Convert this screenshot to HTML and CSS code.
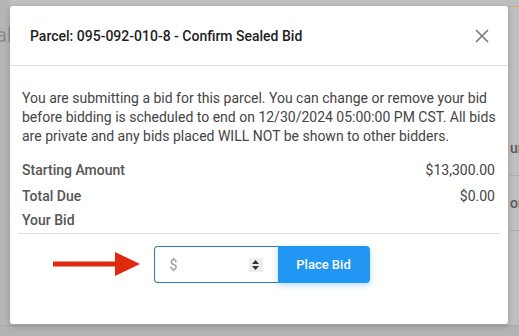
FILE: index.html
```html
<!DOCTYPE html>
<html lang="en">
<head>
  <meta charset="UTF-8" />
  <meta name="viewport" content="width=device-width, initial-scale=1.0"/>
  <title>Confirm Sealed Bid</title>
  <link rel="stylesheet" href="styles.css">
</head>
<body>
  <div class="page">
    <div class="page-top"></div>
    <div class="page-left">al</div>
    <div class="page-right">
      <div class="page-row">ur</div>
      <div class="page-row">or</div>
    </div>
    <div class="page-bottom"></div>
  </div>

  <div class="modal">
    <div class="modal-header">
      <h2 class="modal-title">Parcel: 095-092-010-8 - Confirm Sealed Bid</h2>
      <button class="close-button" aria-label="Close">
        <svg width="14" height="14" viewBox="0 0 14 14"><path d="M1 1 L13 13 M13 1 L1 13" stroke="#777" stroke-width="1.6" fill="none"/></svg>
      </button>
    </div>

    <div class="modal-body">
      <p class="notice">You are submitting a bid for this parcel. You can change or remove your bid before bidding is scheduled to end on 12/30/2024 05:00:00 PM CST. All bids are private and any bids placed WILL NOT be shown to other bidders.</p>

      <div class="bid-row"><span class="label">Starting Amount</span><span class="value">$13,300.00</span></div>
      <div class="bid-row"><span class="label">Total Due</span><span class="value">$0.00</span></div>
      <div class="bid-row"><span class="label">Your Bid</span><span class="value"></span></div>

      <hr class="divider">

      <div class="bid-form">
        <svg class="arrow" width="87" height="24" viewBox="0 0 87 24"><rect x="0" y="9.5" width="64" height="5" fill="#e12a0b"/><polygon points="62,0 87,12 62,24" fill="#e12a0b"/></svg>
        <div class="bid-input">
          <span class="placeholder">$</span>
          <span class="spinner">
            <svg width="9" height="12" viewBox="0 0 9 12"><polygon points="4.5,1 8,5 1,5" fill="#333"/><polygon points="1,7 8,7 4.5,11" fill="#333"/></svg>
          </span>
        </div>
        <button class="place-bid">Place Bid</button>
      </div>
    </div>
  </div>
</body>
</html>
```

FILE: styles.css
```css
body {
  margin: 0;
  font-family: Roboto, "Liberation Sans", sans-serif;
  background: #bfbfbf;
  width: 519px;
  height: 336px;
  overflow: hidden;
  position: relative;
}

.page {
  height: 100%;
  position: relative;
}

.page-top {
  height: 6px;
  border-bottom: 1px solid #a9a9a9;
  width: 10px;
}

.page-left {
  position: absolute;
  left: 0;
  top: 0;
  width: 10px;
  height: 325px;
  background: #b6b6b6;
  color: #8e8e8e;
  font-size: 20px;
  line-height: 70px;
  overflow: hidden;
  text-indent: -4px;
}

.page-right {
  position: absolute;
  left: 508px;
  top: 6px;
  width: 11px;
  height: 319px;
  border-top: 1px solid #d8b25e;
  overflow: hidden;
}

.page-row {
  color: #5a5a5a;
  font-size: 14px;
  font-weight: 500;
  height: 54px;
  line-height: 54px;
  margin-left: 2px;
  border-bottom: 1px solid #ababab;
}

.page-row:first-child {
  margin-top: 114px;
}

.page-bottom {
  position: absolute;
  left: 0;
  top: 325px;
  width: 519px;
  height: 11px;
  background: #b3b3b3;
  border-top: 1px solid #a6a6a6;
}

.modal {
  position: absolute;
  top: 6px;
  left: 10px;
  width: 498px;
  height: 318px;
  background: #fff;
  border-radius: 3px;
  box-shadow: 0 2px 6px rgba(0, 0, 0, 0.2);
}

.modal-header {
  height: 59px;
  border-bottom: 1px solid #dedede;
  display: flex;
  align-items: center;
  justify-content: space-between;
  padding: 0 19px 0 20px;
}

.modal-title {
  margin: 0;
  font-size: 14px;
  font-weight: 500;
  color: #1e1e1e;
}

.close-button {
  background: none;
  border: none;
  padding: 0;
  width: 14px;
  height: 14px;
  cursor: pointer;
  display: flex;
}

.modal-body {
  padding: 23px 13px 0 12px;
}

.notice {
  margin: 0 -8px 12px 0;
  font-size: 14px;
  line-height: 19px;
  color: #444;
}

.bid-row {
  display: flex;
  justify-content: space-between;
  height: 24px;
  line-height: 24px;
  font-size: 14px;
}

.bid-row:first-of-type {
  margin-bottom: 2px;
}

.label {
  font-weight: 500;
  color: #555;
}

.value {
  color: #444;
}

.divider {
  border: none;
  border-top: 1px solid #dedede;
  margin: 1px -5px 0 -4px;
}

.bid-form {
  position: relative;
  display: flex;
  justify-content: center;
  margin-top: 12px;
  padding-left: 6px;
}

.arrow {
  position: absolute;
  left: 31px;
  top: 6px;
}

.bid-input {
  height: 35px;
  border: 1px solid #2a7bbd;
  border-right: none;
  border-radius: 4px 0 0 4px;
  display: flex;
  align-items: center;
  justify-content: space-between;
  padding: 0 15px 0 15px;
  box-sizing: content-box;
  width: 93px;
}

.placeholder {
  color: #999;
  font-size: 14px;
}

.spinner {
  width: 14px;
  height: 14px;
  background: #eee;
  display: flex;
  align-items: center;
  justify-content: center;
}

.place-bid {
  height: 37px;
  width: 92px;
  background: #2196f3;
  border: none;
  border-radius: 0 4px 4px 0;
  color: #fff;
  font-family: Roboto, "Liberation Sans", sans-serif;
  font-size: 13px;
  font-weight: 500;
  box-shadow: 0 2px 6px rgba(33, 150, 243, 0.35);
  cursor: pointer;
}
```
